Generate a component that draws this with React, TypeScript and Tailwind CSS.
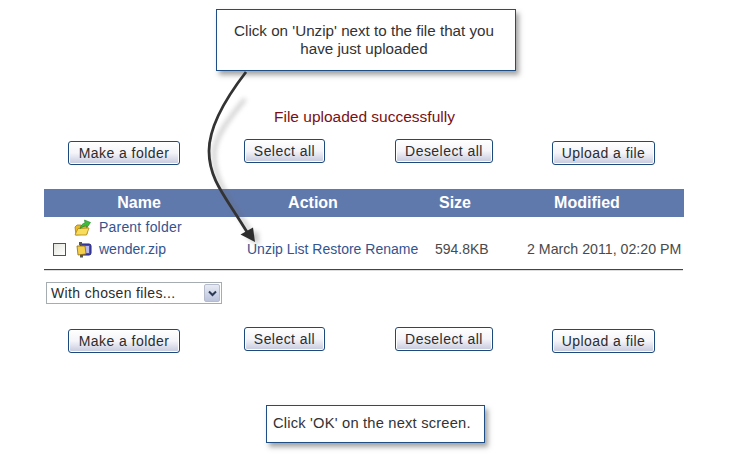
import React from "react";

function Btn({ label, w, mt }: { label: string; w: string; mt: string }) {
  return (
    <div
      className={`${w} ${mt} h-[24px] flex items-center justify-center rounded-[3px] border border-[#1c4a7c] bg-gradient-to-b from-white via-[#f4f4f9] to-[#c6c9de] text-[14px] tracking-[0.45px] text-[#2c2c2c] shadow-[inset_0_0_0_1px_#ffffff]`}
    >
      {label}
    </div>
  );
}

function ButtonRow({ className }: { className: string }) {
  return (
    <div className={`flex items-start pl-[68px] ${className}`}>
      <Btn label="Make a folder" w="w-[112px]" mt="mt-[2px]" />
      <div className="ml-[64px]"><Btn label="Select all" w="w-[81px]" mt="mt-0" /></div>
      <div className="ml-[70px]"><Btn label="Deselect all" w="w-[98px]" mt="mt-0" /></div>
      <div className="ml-[59px]"><Btn label="Upload a file" w="w-[103px]" mt="mt-[2px]" /></div>
    </div>
  );
}

function ParentIcon() {
  return (
    <svg width="17" height="17" viewBox="0 0 17 17">
      <path d="M1 8 L3 6 L7 6 L8 7.5 L13 7.5 L13 15 L2 16 Z" fill="#e8b92c" stroke="#a87f14" strokeWidth="0.8" />
      <path d="M1 16 L4 9.5 L15 9 L12.5 16 Z" fill="#f8dc5c" stroke="#b08a18" strokeWidth="0.8" />
      <path d="M6 9.5 C7 6 8.5 4.5 11 4 L10.5 1 L16.5 3.5 L13 8.5 L12.4 6.2 C10.5 6.8 8.5 8 6 9.5 Z" fill="#3fbe3a" stroke="#1f7d22" strokeWidth="0.6" />
    </svg>
  );
}

function ZipIcon() {
  return (
    <svg width="16" height="17" viewBox="0 0 16 17">
      <rect x="4" y="3" width="11" height="11" rx="2" fill="#4a4ac0" stroke="#20206e" strokeWidth="1" />
      <rect x="9" y="5" width="4" height="7" fill="#b9b9ee" />
      <path d="M1 5 L9 5 L10 13 L2 14 Z" fill="#f3cf4c" stroke="#8c6c12" strokeWidth="0.8" />
      <rect x="3" y="1" width="3" height="3" fill="#555" />
      <rect x="4" y="14" width="3" height="2.5" fill="#555" />
    </svg>
  );
}

export default function App() {
  return (
    <div className="relative h-[457px] w-[753px] overflow-hidden bg-white font-['Liberation_Sans',Arial,sans-serif] text-[14px] text-[#333]">
      <div className="ml-[216px] mt-[9px] flex h-[62px] w-[300px] items-center justify-center border border-[#1f4e86] bg-white pl-[12px] pr-[16px] text-center text-[15.2px] leading-[18px] text-[#333] shadow-[3px_4px_5px_rgba(90,90,90,0.55)]">
        Click on 'Unzip' next to the file that you have just uploaded
      </div>

      <div className="mt-[37px] pl-[274px] text-[15.5px] leading-[18px] text-[#7a1016]">
        File uploaded successfully
      </div>

      <ButtonRow className="mt-[13px]" />

      <div className="ml-[44px] mt-[24px] w-[640px]">
        <div className="grid h-[28px] grid-cols-[190px_158px_126px_166px] items-center bg-[#6079ad] text-[16px] font-bold text-white">
          <div className="text-center">Name</div>
          <div className="text-center">Action</div>
          <div className="text-center">Size</div>
          <div className="pr-[28px] text-center">Modified</div>
        </div>
        <div className="flex h-[20px] items-center pl-[30px] text-[#34548f]">
          <ParentIcon />
          <span className="ml-[8px] tracking-[0.2px]">Parent folder</span>
        </div>
        <div className="grid h-[24px] grid-cols-[203px_171px_109px_157px] items-center text-[14px]">
          <div className="flex items-center pl-[9px] text-[#34548f]">
            <span className="h-[13px] w-[13px] border border-[#38577f] bg-gradient-to-br from-[#e4e4de] to-white" />
            <span className="ml-[10px]"><ZipIcon /></span>
            <span className="ml-[7px]">wender.zip</span>
          </div>
          <div className="whitespace-nowrap text-[#34548f]">Unzip List Restore Rename</div>
          <div className="pl-[17px] pt-[1px] text-[14px] text-[#4a4a4a]">594.8KB</div>
          <div className="whitespace-nowrap pt-[1px] text-[14.2px] text-[#4a4a4a]">2 March 2011, 02:20 PM</div>
        </div>
        <div className="mt-[8px] h-[2px] w-[639px] border-t border-[#444] bg-[#ddd]" />
      </div>

      <div className="ml-[46px] mt-[11px] flex h-[22px] w-[176px] items-center justify-between border border-[#a5acb2] bg-white pl-[4px] pr-[1px] text-[14px] tracking-[0.35px] text-[#2c2c2c]">
        <span>With chosen files...</span>
        <span className="flex h-[18px] w-[16px] items-center justify-center rounded-[2px] border border-[#b6bccb] bg-gradient-to-b from-[#e8ebf5] to-[#bcc4dc]">
          <svg width="9" height="7" viewBox="0 0 9 7">
            <path d="M1 1.5 L4.5 5 L8 1.5" fill="none" stroke="#2b3a55" strokeWidth="2" />
          </svg>
        </span>
      </div>

      <ButtonRow className="mt-[23px]" />

      <div className="ml-[266px] mt-[52px] flex h-[38px] w-[219px] items-center border border-[#1f4e86] bg-white pb-[2px] pl-[6px] text-[14.7px] tracking-[0.2px] text-[#333] shadow-[3px_4px_5px_rgba(90,90,90,0.55)]">
        Click 'OK' on the next screen.
      </div>

      <svg className="pointer-events-none absolute left-0 top-0" width="753" height="457" viewBox="0 0 753 457">
        <defs>
          <filter id="arrowShadow" x="-30%" y="-10%" width="170%" height="120%">
            <feGaussianBlur stdDeviation="2.5" />
          </filter>
        </defs>
        <g filter="url(#arrowShadow)" opacity="0.38" transform="translate(5 3)">
          <path d="M240 96 C222 118 209 135 209 152 C209 180 226 197 247 232" fill="none" stroke="#666" strokeWidth="3.5" />
          <path d="M241 234 L253 228 L254 242 Z" fill="#666" />
        </g>
        <path d="M246 72 C222 103 209 130 209 151 C209 180 226 197 247 232" fill="none" stroke="#333" strokeWidth="2.8" />
        <path d="M240.5 234.5 L253 227.5 L255 242 Z" fill="#2e2e2e" />
      </svg>
    </div>
  );
}
